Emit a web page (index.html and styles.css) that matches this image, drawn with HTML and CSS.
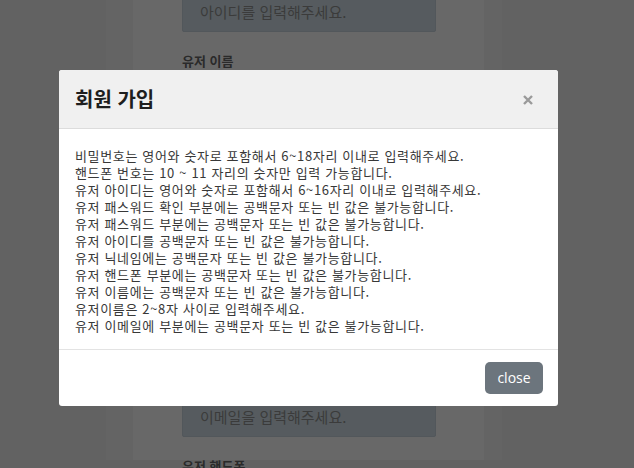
FILE: index.html
```html
<!DOCTYPE html>
<html lang="ko">
<head>
<meta charset="utf-8">
<link rel="stylesheet" href="styles.css">
</head>
<body>
<div class="page">
  <div class="outer-col">
    <div class="col">
      <div class="form">
        <div class="input">아이디를 입력해주세요.</div>
        <div class="group"><div class="label">유저 이름</div><div class="input">이름을 입력해주세요.</div></div>
        <div class="group"><div class="label">유저 패스워드</div><div class="input">패스워드를 입력해주세요.</div></div>
        <div class="group"><div class="label">유저 패스워드 확인</div><div class="input">패스워드를 입력해주세요.</div></div>
        <div class="group"><div class="label">유저 닉네임</div><div class="input">닉네임을 입력해주세요.</div></div>
        <div class="group"><div class="label">유저 이메일</div><div class="input">이메일을 입력해주세요.</div></div>
        <div class="group"><div class="label">유저 핸드폰</div></div>
      </div>
    </div>
  </div>
</div>
<div class="overlay">
  <div class="modal">
    <div class="modal-header">
      <h5 class="modal-title">회원 가입</h5>
      <span class="close" aria-label="close">
        <svg width="10" height="10" viewBox="0 0 10 10"><path d="M1 1L9 9M9 1L1 9" stroke="#9a9a9a" stroke-width="2.4" stroke-linecap="butt"/></svg>
      </span>
    </div>
    <div class="modal-body">
      <p>비밀번호는 영어와 숫자로 포함해서 6~18자리 이내로 입력해주세요.</p>
      <p>핸드폰 번호는 10 ~ 11 자리의 숫자만 입력 가능합니다.</p>
      <p>유저 아이디는 영어와 숫자로 포함해서 6~16자리 이내로 입력해주세요.</p>
      <p>유저 패스워드 확인 부분에는 공백문자 또는 빈 값은 불가능합니다.</p>
      <p>유저 패스워드 부분에는 공백문자 또는 빈 값은 불가능합니다.</p>
      <p>유저 아이디를 공백문자 또는 빈 값은 불가능합니다.</p>
      <p>유저 닉네임에는 공백문자 또는 빈 값은 불가능합니다.</p>
      <p>유저 핸드폰 부분에는 공백문자 또는 빈 값은 불가능합니다.</p>
      <p>유저 이름에는 공백문자 또는 빈 값은 불가능합니다.</p>
      <p>유저이름은 2~8자 사이로 입력해주세요.</p>
      <p>유저 이메일에 부분에는 공백문자 또는 빈 값은 불가능합니다.</p>
    </div>
    <div class="modal-footer">
      <button class="btn">close</button>
    </div>
  </div>
</div>
</body>
</html>
```
FILE: styles.css
```css
html, body {
  margin: 0;
  padding: 0;
  height: 100%;
  overflow: hidden;
}
body {
  background: #626262;
  font-family: "Noto Sans CJK KR", "Noto Sans", sans-serif;
}
.page {
  height: 468px;
  overflow: hidden;
}
.outer-col {
  margin-left: 106px;
  width: 396px;
  height: 468px;
  background: #646464;
}
.col {
  margin-left: 27px;
  width: 351px;
  height: 468px;
  background: #686868;
  padding-left: 49px;
  box-sizing: border-box;
}
.form {
  width: 254px;
  margin-top: -8px;
}
.input {
  height: 40px;
  box-sizing: border-box;
  background: #565b5f;
  border: 1px solid #52575b;
  border-radius: 2px;
  padding-left: 17px;
  font-size: 15px;
  line-height: 38px;
  color: #3b3b3b;
}
.group {
  padding-top: 20px;
}
.label {
  font-size: 13px;
  line-height: 17px;
  font-weight: bold;
  color: #2a2a2a;
  margin-bottom: 4px;
}
.overlay {
  position: fixed;
  inset: 0;
  padding: 70px 0 0 59px;
}
.modal {
  width: 499px;
  background: #fff;
  border-radius: 3px;
  overflow: hidden;
}
.modal-header {
  display: flex;
  align-items: center;
  justify-content: space-between;
  background: #f0f0f0;
  border-bottom: 1px solid #dcdcdc;
  padding: 16px 25px 16px 16px;
}
.modal-title {
  margin: 0;
  font-size: 20px;
  line-height: 26px;
  font-weight: bold;
  color: #1e1e1e;
}
.close {
  display: flex;
  width: 10px;
  height: 10px;
  margin-top: 2px;
}
.modal-body {
  padding: 18px 16px 15px 16px;
  border-bottom: 1px solid #e3e3e3;
}
.modal-body p {
  margin: 0;
  font-size: 13px;
  line-height: 17px;
  letter-spacing: 0.65px;
  color: #383838;
  white-space: nowrap;
}
.modal-footer {
  display: flex;
  justify-content: flex-end;
  padding: 12px 15px 12px 16px;
}
.btn {
  font-family: "Open Sans", sans-serif;
  font-size: 14px;
  line-height: 20px;
  padding: 6px 12px;
  width: 58px;
  height: 32px;
  border: none;
  border-radius: 5px;
  background: #6c757d;
  color: #fff;
}
```
